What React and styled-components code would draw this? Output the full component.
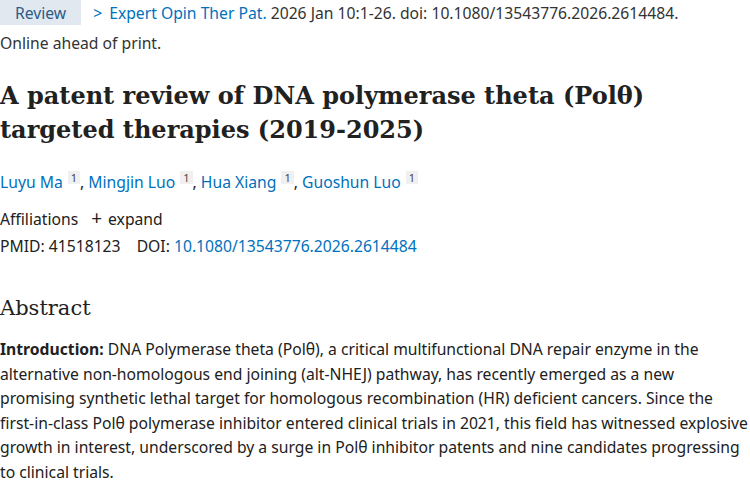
import React from 'react';
import styled, { createGlobalStyle } from 'styled-components';

const Global = createGlobalStyle`
  body {
    margin: 0;
    background: #fff;
    font-family: "Noto Sans", "Open Sans", sans-serif;
    color: #212121;
  }
`;

const Page = styled.div`
  width: 750px;
  height: 500px;
  overflow: hidden;
  font-size: 15.7px;
`;

const Citation = styled.div`
  display: flex;
  align-items: center;
  height: 25px;
  color: #333;
  white-space: nowrap;
`;

const Badge = styled.span`
  display: inline-flex;
  align-items: center;
  height: 25px;
  padding: 0 15px;
  background: #e2e8f0;
  color: #2b5c87;
  margin-right: 12px;
`;

const Link = styled.a`
  color: #0071bc;
  text-decoration: none;
`;

const Chevron = styled.span`
  color: #0071bc;
  margin-right: 7px;
`;

const Status = styled.div`
  margin-top: 7px;
  color: #333;
`;

const Title = styled.h1`
  font-family: "DejaVu Serif", "Liberation Serif", serif;
  font-weight: bold;
  font-size: 24px;
  line-height: 34px;
  max-width: 680px;
  margin: 25px 0 0;
  color: #212121;
`;

const Authors = styled.div`
  margin-top: 24px;
`;

const Sup = styled.sup`
  display: inline-block;
  background: #f0f0f0;
  color: #444;
  font-size: 11px;
  line-height: 13px;
  padding: 0 3px;
  margin-left: 5px;
  vertical-align: 6px;
`;

const Meta = styled.div`
  line-height: 27px;
  margin-top: ${p => p.top || 0}px;
  color: #212121;
`;

const Plus = styled.span`
  margin: 0 6px 0 13px;
  font-size: 19px;
`;

const Label = styled.span`
  margin-right: 12px;
`;

const Heading = styled.h2`
  font-family: "DejaVu Serif", "Liberation Serif", serif;
  font-weight: normal;
  font-size: 21px;
  margin: 36px 0 0;
  color: #212121;
`;

const Para = styled.p`
  margin: 17px 0 0;
  line-height: 24.6px;
  color: #212121;
`;

export default function App() {
  return (
    <Page>
      <Global />
      <Citation>
        <Badge>Review</Badge>
        <Chevron>&gt;</Chevron>
        <Link href="#">Expert Opin Ther Pat.</Link>
        &nbsp;2026 Jan 10:1-26. doi: 10.1080/13543776.2026.2614484.
      </Citation>
      <Status>Online ahead of print.</Status>
      <Title>
        A patent review of DNA polymerase theta (Polθ) targeted therapies (2019-2025)
      </Title>
      <Authors>
        <Link href="#">Luyu Ma</Link><Sup>1</Sup>,{' '}
        <Link href="#">Mingjin Luo</Link><Sup>1</Sup>,{' '}
        <Link href="#">Hua Xiang</Link><Sup>1</Sup>,{' '}
        <Link href="#">Guoshun Luo</Link><Sup>1</Sup>
      </Authors>
      <Meta top={12}>
        Affiliations<Plus>+</Plus>expand
      </Meta>
      <Meta>
        <Label>PMID: 41518123</Label> DOI: <Link href="#">10.1080/13543776.2026.2614484</Link>
      </Meta>
      <Heading>Abstract</Heading>
      <Para>
        <b>Introduction:</b> DNA Polymerase theta (Polθ), a critical multifunctional DNA repair enzyme in the
        alternative non-homologous end joining (alt-NHEJ) pathway, has recently emerged as a new
        promising synthetic lethal target for homologous recombination (HR) deficient cancers. Since the
        first-in-class Polθ polymerase inhibitor entered clinical trials in 2021, this field has witnessed explosive
        growth in interest, underscored by a surge in Polθ inhibitor patents and nine candidates progressing
        to clinical trials.
      </Para>
    </Page>
  );
}
